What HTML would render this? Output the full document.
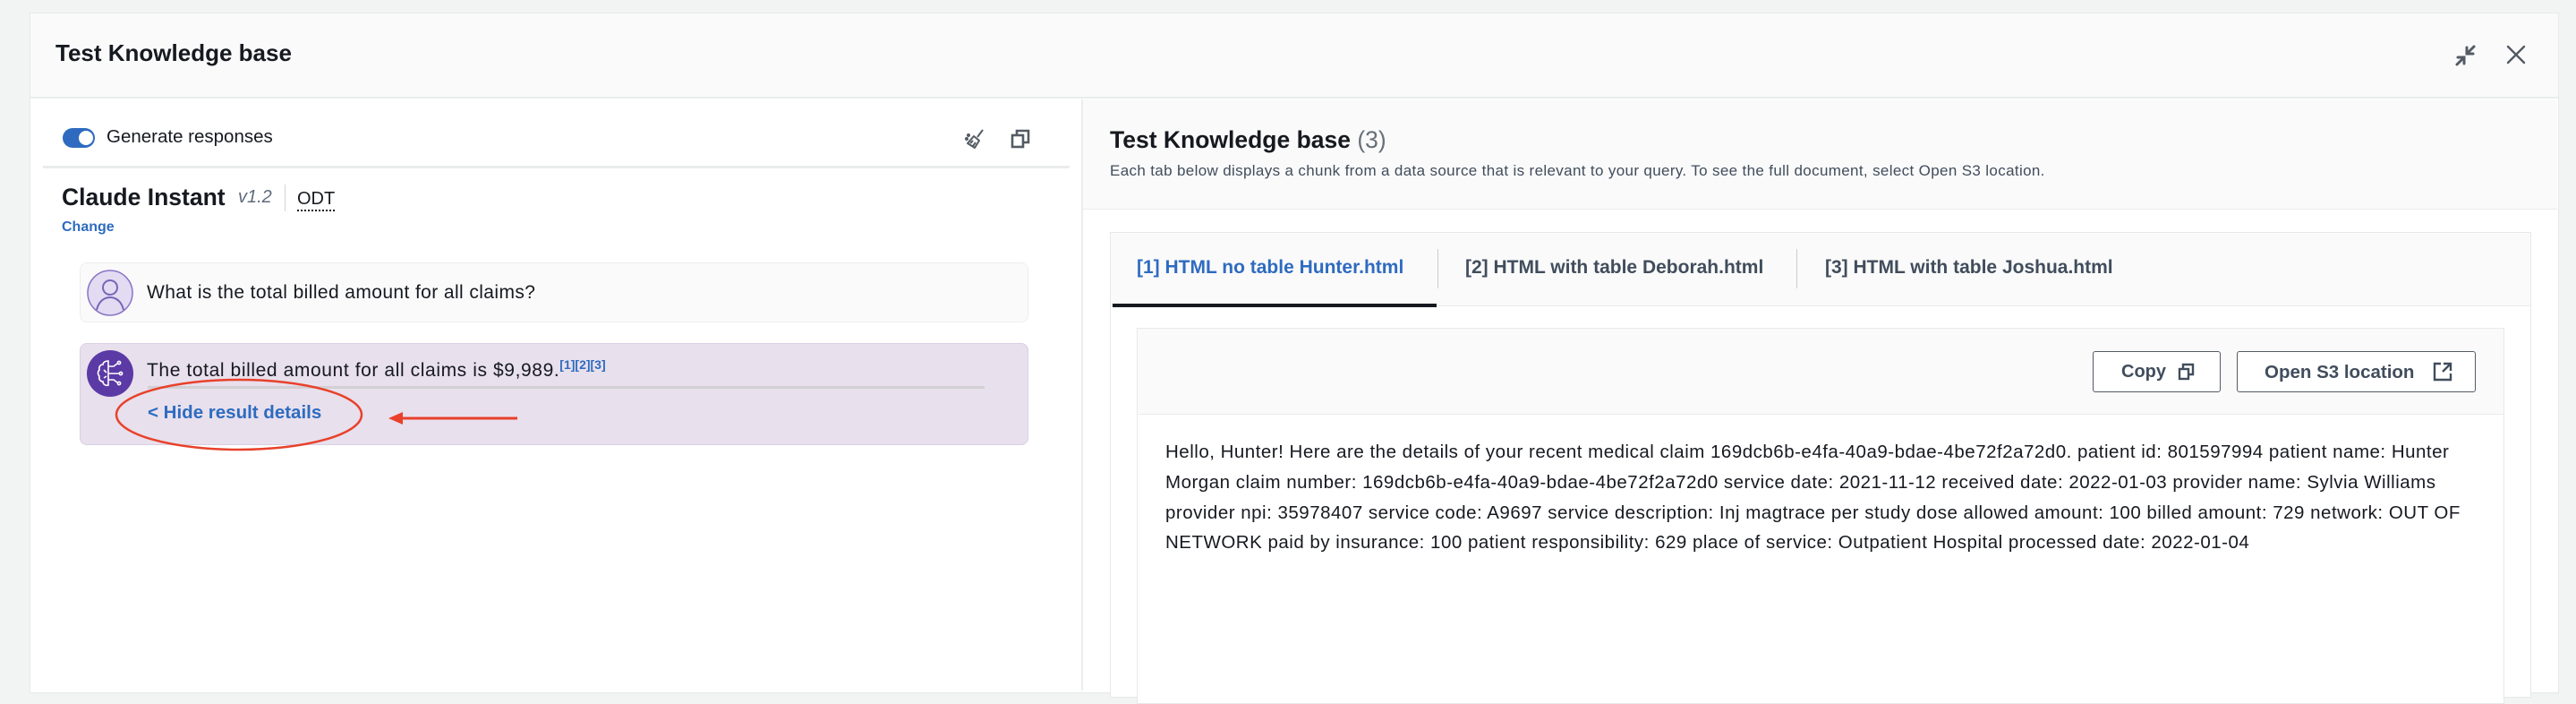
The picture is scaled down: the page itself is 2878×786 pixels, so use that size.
<!DOCTYPE html>
<html><head><meta charset="utf-8"><style>
*{box-sizing:border-box;margin:0;padding:0}
body{width:2878px;height:768px;background:#f2f3f3;font-family:"Liberation Sans",sans-serif;color:#16191f;position:relative;overflow:hidden}
.a{position:absolute;white-space:nowrap}
.panel{position:absolute;left:33px;top:14px;width:2826px;height:760px;background:#fff;border:1px solid #e6e8ea}
</style></head><body>
<div class="panel"></div>
<!-- header -->
<div class="a" style="left:34px;top:15px;width:2824px;height:95px;background:#fafafa;border-bottom:2px solid #eaeded"></div>
<div class="a" style="left:62px;top:44px;font-size:26px;font-weight:bold;color:#16191f">Test Knowledge base</div>
<svg class="a" style="left:2742px;top:49px" width="26" height="26" viewBox="0 0 26 26" fill="none" stroke="#545b64" stroke-width="3" stroke-linecap="round"><path d="M22 3l-8 8M14 4v7h7M3 23l8-8M4 15h7v7"/></svg>
<svg class="a" style="left:2800px;top:50px" width="22" height="22" viewBox="0 0 22 22" stroke="#545b64" stroke-width="2.4" stroke-linecap="round"><path d="M2 2l18 18M20 2L2 20"/></svg>

<!-- left pane -->
<div class="a" style="left:1208px;top:111px;width:2px;height:660px;background:#eaeded"></div>
<div class="a" style="left:70px;top:143px;width:36px;height:22px;border-radius:11px;background:#2e6bc0"></div>
<div class="a" style="left:88px;top:146px;width:16px;height:16px;border-radius:50%;background:#fff"></div>
<div class="a" style="left:119px;top:141px;font-size:20.5px;color:#16191f">Generate responses</div>
<svg class="a" style="left:1076px;top:141px" width="28" height="28" viewBox="0 0 28 28" fill="none" stroke="#545b64" stroke-width="2" stroke-linejoin="round"><path d="M22 4l-6 8M12 11l6 5-5 8-8-5z M8 19l3-3M11 22l3-4"/><circle cx="6" cy="10" r="1" fill="#545b64"/><circle cx="4" cy="14" r="1" fill="#545b64"/></svg>
<svg class="a" style="left:1128px;top:143px" width="24" height="24" viewBox="0 0 24 24" fill="none" stroke="#545b64" stroke-width="2.6"><rect x="3" y="8" width="12" height="13"/><path d="M8 8V3h13v13h-6"/></svg>
<div class="a" style="left:48px;top:185px;width:1147px;height:3px;background:#e9ebed"></div>
<div class="a" style="left:69px;top:205px;font-size:26.5px;font-weight:bold">Claude Instant</div>
<div class="a" style="left:266px;top:209px;font-size:20px;font-style:italic;color:#5f6b7a">v1.2</div>
<div class="a" style="left:318px;top:206px;width:1px;height:30px;background:#d1d5db"></div>
<div class="a" style="left:332px;top:210px;font-size:20px;border-bottom:2px dotted #16191f;line-height:24px">ODT</div>
<div class="a" style="left:69px;top:245px;font-size:16px;font-weight:bold;color:#2e6bc0">Change</div>

<div class="a" style="left:89px;top:293px;width:1060px;height:67px;background:#fafafa;border:1px solid #eeeeee;border-radius:8px"></div>
<svg class="a" style="left:97px;top:301px" width="52" height="52" viewBox="0 0 52 52"><circle cx="26" cy="26" r="25" fill="#e2dbf2" stroke="#8a73c7" stroke-width="1.5"/><circle cx="26" cy="20" r="8" fill="none" stroke="#7a63b8" stroke-width="2"/><path d="M11 45c2-9 8-14 15-14s13 5 15 14" fill="none" stroke="#7a63b8" stroke-width="2"/></svg>
<div class="a" style="left:164px;top:315px;font-size:21px;letter-spacing:0.4px">What is the total billed amount for all claims?</div>

<div class="a" style="left:89px;top:383px;width:1060px;height:114px;background:#e8e0ec;border:1px solid #d9cfe3;border-radius:8px"></div>
<svg class="a" style="left:97px;top:391px" width="52" height="52" viewBox="0 0 52 52" fill="none" stroke="#fff" stroke-width="1.6"><circle cx="26" cy="26" r="26" fill="#5b3aa6" stroke="none"/><path d="M24 12c-4 0-6 2-6 4-3 0-5 3-4 6-2 2-2 5 0 7-1 3 1 6 4 6 0 3 3 5 6 4V12z"/><path d="M24 18h6l4-3M24 26h10M24 33h6l4 3M34 26h3M19 22l3 3M19 31l3-2"/><circle cx="36" cy="14" r="1.6"/><circle cx="38" cy="26" r="1.6"/><circle cx="36" cy="37" r="1.6"/></svg>
<div class="a" style="left:164px;top:399px;font-size:21px;letter-spacing:0.6px">The total billed amount for all claims is $9,989.<sup style="font-size:14px;color:#2e6bc0;font-weight:bold;letter-spacing:0">[1][2][3]</sup></div>
<div class="a" style="left:165px;top:431px;width:935px;height:3px;background:#d2d0d5"></div>
<div class="a" style="left:165px;top:449px;font-size:20.5px;font-weight:bold;color:#2e6bc0">&lt; Hide result details</div>
<svg class="a" style="left:120px;top:420px" width="480" height="100" viewBox="0 0 480 100" fill="none"><ellipse cx="147" cy="43" rx="137" ry="39" stroke="#e8412b" stroke-width="2.5"/><path d="M330 47h128" stroke="#e8412b" stroke-width="3"/><path d="M314 47l16-7v14z" fill="#e8412b"/></svg>

<!-- right pane -->
<div class="a" style="left:1210px;top:111px;width:1647px;height:123px;background:#fafafa;border-bottom:1px solid #eaeded"></div>
<div class="a" style="left:1240px;top:141px;font-size:26.5px;font-weight:bold">Test Knowledge base <span style="font-weight:normal;color:#687078">(3)</span></div>
<div class="a" style="left:1240px;top:181px;font-size:17px;letter-spacing:0.35px;color:#414d5c">Each tab below displays a chunk from a data source that is relevant to your query. To see the full document, select Open S3 location.</div>

<div class="a" style="left:1240px;top:259px;width:1588px;height:520px;border:1px solid #e6e8ea;background:#fff"></div>
<div class="a" style="left:1241px;top:260px;width:1586px;height:82px;background:#fafafa;border-bottom:1px solid #eaeded"></div>
<div class="a" style="left:1270px;top:287px;font-size:21px;font-weight:bold;color:#2e6bc0">[1] HTML no table Hunter.html</div>
<div class="a" style="left:1606px;top:278px;width:1px;height:44px;background:#c6cbd1"></div>
<div class="a" style="left:1637px;top:287px;font-size:21px;font-weight:bold;color:#414d5c">[2] HTML with table Deborah.html</div>
<div class="a" style="left:2007px;top:278px;width:1px;height:44px;background:#c6cbd1"></div>
<div class="a" style="left:2039px;top:287px;font-size:21px;font-weight:bold;color:#414d5c">[3] HTML with table Joshua.html</div>
<div class="a" style="left:1243px;top:339px;width:362px;height:4px;background:#16191f"></div>

<div class="a" style="left:1270px;top:366px;width:1528px;height:420px;border:1px solid #e6e8ea;background:#fff"></div>
<div class="a" style="left:1271px;top:367px;width:1526px;height:96px;background:#fafafa;border-bottom:1px solid #eaeded"></div>
<div class="a" style="left:2338px;top:392px;width:143px;height:46px;border:1.5px solid #545b64;border-radius:3px;background:#fff"></div>
<div class="a" style="left:2370px;top:404px;font-size:20px;font-weight:bold;color:#414d5c">Copy</div>
<svg class="a" style="left:2433px;top:405px" width="20" height="20" viewBox="0 0 20 20" fill="none" stroke="#414d5c" stroke-width="2.4"><rect x="2" y="7" width="10" height="11"/><path d="M6 7V2h11v11h-5"/></svg>
<div class="a" style="left:2499px;top:392px;width:267px;height:46px;border:1.5px solid #545b64;border-radius:3px;background:#fff"></div>
<div class="a" style="left:2530px;top:404px;font-size:20.5px;font-weight:bold;color:#414d5c">Open S3 location</div>
<svg class="a" style="left:2718px;top:404px" width="22" height="22" viewBox="0 0 22 22" fill="none" stroke="#414d5c" stroke-width="2.4"><path d="M9 2H2v18h18v-7M12 2h8v8M20 2l-9 9"/></svg>

<div class="a" style="left:1302px;top:488px;font-size:20.5px;letter-spacing:0.5px;line-height:33.8px;color:#16191f">Hello, Hunter! Here are the details of your recent medical claim 169dcb6b-e4fa-40a9-bdae-4be72f2a72d0. patient id: 801597994 patient name: Hunter<br>Morgan claim number: 169dcb6b-e4fa-40a9-bdae-4be72f2a72d0 service date: 2021-11-12 received date: 2022-01-03 provider name: Sylvia Williams<br>provider npi: 35978407 service code: A9697 service description: Inj magtrace per study dose allowed amount: 100 billed amount: 729 network: OUT OF<br>NETWORK paid by insurance: 100 patient responsibility: 629 place of service: Outpatient Hospital processed date: 2022-01-04</div>
</body></html>
